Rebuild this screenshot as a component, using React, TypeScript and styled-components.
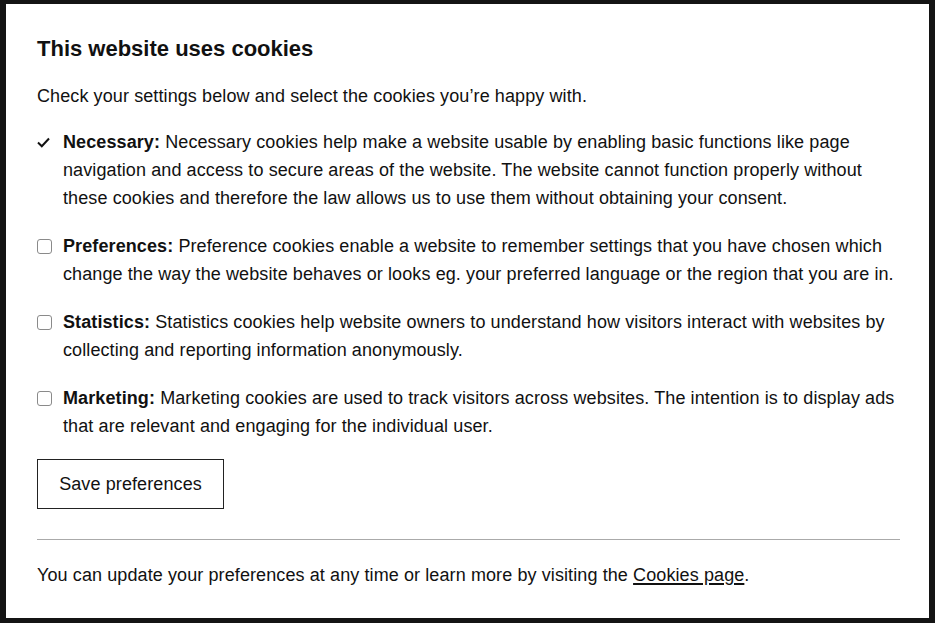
import React from "react";
import styled, { createGlobalStyle } from "styled-components";

const Global = createGlobalStyle`
  html, body { margin: 0; padding: 0; background: #151515; }
  body { font-family: "Liberation Sans", Arial, sans-serif; color: #111; }
  #root { min-height: 623px; }
`;

const Backdrop = styled.div`
  height: 623px;
  background: #141414;
  padding: 4px 0 0 6px;
  box-sizing: border-box;
`;

const Dialog = styled.div`
  width: 923px;
  height: 614px;
  background: #fff;
  box-sizing: border-box;
  padding: 32px 29px 0 31px;
  display: flex;
  flex-direction: column;
  letter-spacing: 0.1px;
`;

const Title = styled.h2`
  margin: 0;
  font-size: 22px;
  font-weight: 700;
  line-height: 26px;
  letter-spacing: 0;
`;

const Intro = styled.p`
  margin: 20px 0 0;
  font-size: 18px;
  line-height: 28px;
`;

const List = styled.ul`
  list-style: none;
  margin: 18px 0 0;
  padding: 0;
  display: flex;
  flex-direction: column;
  gap: 20px;
`;

const Item = styled.li`
  display: flex;
  gap: 11px;
  font-size: 18px;
  line-height: 28px;
`;

const Marker = styled.span`
  flex: 0 0 15px;
  height: 28px;
  display: flex;
  align-items: center;
`;

const Box = styled.span`
  width: 13px;
  height: 13px;
  border: 1px solid #8a8a8a;
  border-radius: 3px;
  background: #fff;
`;

const Label = styled.strong`
  font-weight: 700;
`;

const Button = styled.button`
  margin-top: 19px;
  align-self: flex-start;
  width: 187px;
  height: 50px;
  background: #fff;
  border: 1px solid #222;
  border-radius: 0;
  font-family: inherit;
  font-size: 18px;
  letter-spacing: 0.1px;
  color: #111;
  cursor: pointer;
`;

const Rule = styled.hr`
  margin: 30px 0 0;
  border: 0;
  border-top: 1px solid #aaa;
`;

const Footer = styled.p`
  margin: 21px 0 0;
  font-size: 18px;
  line-height: 28px;
`;

const Link = styled.a`
  color: #111;
  text-decoration: underline;
  text-decoration-thickness: 2px;
  text-underline-offset: 2px;
`;

const Check = () => (
  <svg width="13" height="11" viewBox="0 0 13 11" fill="none">
    <path d="M1 5.5 L4.8 9.2 L12 1.5" stroke="#111" strokeWidth="2" />
  </svg>
);

const items = [
  {
    checked: true,
    label: "Necessary:",
    text: "Necessary cookies help make a website usable by enabling basic functions like page navigation and access to secure areas of the website. The website cannot function properly without these cookies and therefore the law allows us to use them without obtaining your consent.",
  },
  {
    checked: false,
    label: "Preferences:",
    text: "Preference cookies enable a website to remember settings that you have chosen which change the way the website behaves or looks eg. your preferred language or the region that you are in.",
  },
  {
    checked: false,
    label: "Statistics:",
    text: "Statistics cookies help website owners to understand how visitors interact with websites by collecting and reporting information anonymously.",
  },
  {
    checked: false,
    label: "Marketing:",
    text: "Marketing cookies are used to track visitors across websites. The intention is to display ads that are relevant and engaging for the individual user.",
  },
];

export default function App() {
  return (
    <>
      <Global />
      <Backdrop>
        <Dialog>
          <Title>This website uses cookies</Title>
          <Intro>Check your settings below and select the cookies you’re happy with.</Intro>
          <List>
            {items.map((it) => (
              <Item key={it.label}>
                <Marker>{it.checked ? <Check /> : <Box />}</Marker>
                <span>
                  <Label>{it.label}</Label> {it.text}
                </span>
              </Item>
            ))}
          </List>
          <Button>Save preferences</Button>
          <Rule />
          <Footer>
            You can update your preferences at any time or learn more by visiting the{" "}
            <Link href="#">Cookies page</Link>.
          </Footer>
        </Dialog>
      </Backdrop>
    </>
  );
}
